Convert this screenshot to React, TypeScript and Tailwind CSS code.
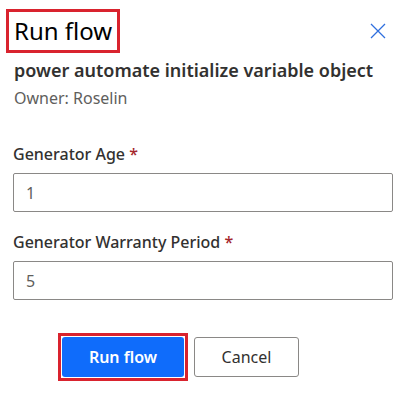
function Field({ label, value }: { label: string; value: string }) {
  return (
    <div className="flex flex-col">
      <label className="text-[16px] font-medium leading-[22px] text-[#323130]">
        {label} <span className="text-[#a4262c]">*</span>
      </label>
      <input
        readOnly
        value={value}
        className="mt-[8px] h-[39px] w-full rounded-[2px] border border-[#8a8886] px-[12px] text-[16px] text-[#605e5c] outline-none"
      />
    </div>
  );
}

export default function App() {
  return (
    <div
      className="h-[398px] w-[406px] bg-white"
      style={{ fontFamily: '"Noto Sans", "Open Sans", sans-serif' }}
    >
      <div className="flex items-start justify-between pl-[6px] pr-[20px] pt-[9px]">
        <div className="border-[3px] border-[#d9232e] px-[5px] pt-[2px] pb-[3px]">
          <h1 className="text-[24px] leading-[33px] text-black">Run flow</h1>
        </div>
        <button className="mt-[14px] text-[#2f6fde]">
          <svg width="16" height="16" viewBox="0 0 16 16" fill="none" stroke="currentColor" strokeWidth="1.3">
            <path d="M1 1L15 15M15 1L1 15" />
          </svg>
        </button>
      </div>

      <div className="px-[13px]">
        <div className="mt-[5px] pl-[1px] text-[18px] font-semibold leading-[24px] text-[#323130]">
          power automate initialize variable object
        </div>
        <div className="mt-[6px] pl-[1px] text-[16px] leading-[21px] text-[#605e5c]">Owner: Roselin</div>

        <div className="mt-[34px] flex flex-col gap-[19px]">
          <Field label="Generator Age" value="1" />
          <Field label="Generator Warranty Period" value="5" />
        </div>

        <div className="mt-[33px] flex items-center gap-[6px] pl-[45px]">
          <div className="border-[3px] border-[#d9232e] p-[1px]">
            <button className="h-[40px] w-[122px] rounded-[3px] bg-[#0f6cfb] text-[16px] font-semibold text-white">
              Run flow
            </button>
          </div>
          <button className="h-[40px] w-[105px] rounded-[3px] border border-[#8a8886] bg-white text-[16px] text-[#323130]">
            Cancel
          </button>
        </div>
      </div>
    </div>
  );
}
